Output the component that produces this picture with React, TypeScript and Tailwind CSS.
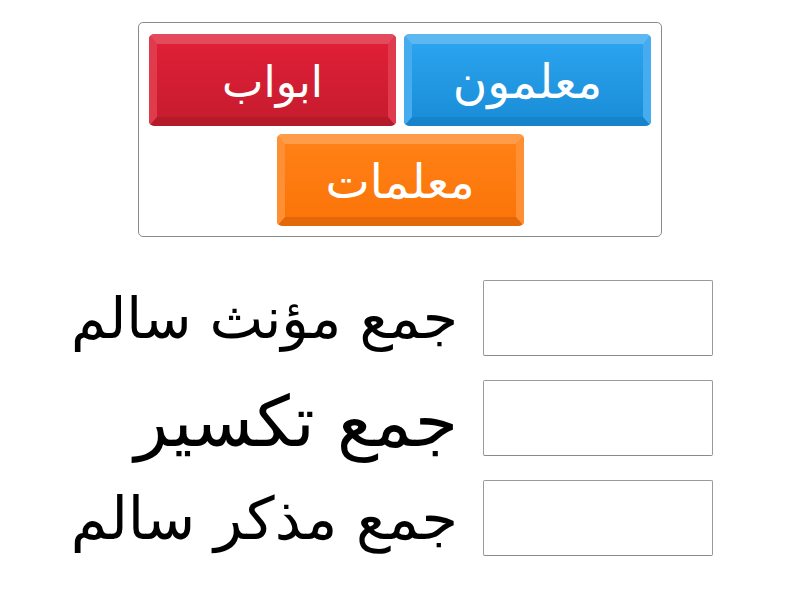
import React from "react";

const btnBase =
  "w-[247px] h-[92px] rounded-[5px] border-solid border-t-[10px] border-x-[8px] border-b-[9px] flex items-center justify-center text-white text-[47px] leading-none";

export default function App() {
  return (
    <div
      className="w-[800px] h-[600px] bg-white relative"
      style={{ fontFamily: '"DejaVu Sans", sans-serif' }}
    >
      <div className="pt-[22px] flex justify-center">
        <div
          dir="rtl"
          className="w-[524px] border border-[#8a8a8a] rounded-[5px] px-[10px] pt-[11px] pb-[10px] flex flex-wrap justify-center gap-[8px]"
        >
          <div
            className={`${btnBase} bg-gradient-to-b from-[#2ba3ee] to-[#1a8ed9] border-t-[#5db8f2] border-x-[#45adef] border-b-[#1683ca]`}
          >
            <span className="mt-[2px]">معلمون</span>
          </div>
          <div
            className={`${btnBase} bg-gradient-to-b from-[#df1f36] to-[#c81c2f] border-t-[#e34b5d] border-x-[#e03a4d] border-b-[#b51a2b]`}
          >
            <span className="mt-[2px] text-[44px]">ابواب</span>
          </div>
          <div
            className={`${btnBase} bg-gradient-to-b from-[#ff8016] to-[#fb7508] border-t-[#ff9c4a] border-x-[#ff8f33] border-b-[#e2680a]`}
          >
            <span className="mt-[2px]">معلمات</span>
          </div>
        </div>
      </div>

      <div className="mt-[43px] flex flex-col gap-[24px]">
        {[
          { t: "جمع مؤنث سالم", s: "text-[57px]" },
          { t: "جمع تكسير", s: "text-[70px] mt-[8px]" },
          { t: "جمع مذكر سالم", s: "text-[59px]" },
        ].map((r, i) => (
          <div key={i} className="flex items-center h-[76px]">
            <div
              dir="rtl"
              className={`w-[458px] text-right text-black leading-none whitespace-nowrap ${r.s}`}
            >
              {r.t}
            </div>
            <div className="ml-[25px] w-[230px] h-[76px] border border-[#9a9a9a] border-b-[#8a8a8a] rounded-[2px] bg-white" />
          </div>
        ))}
      </div>
    </div>
  );
}
